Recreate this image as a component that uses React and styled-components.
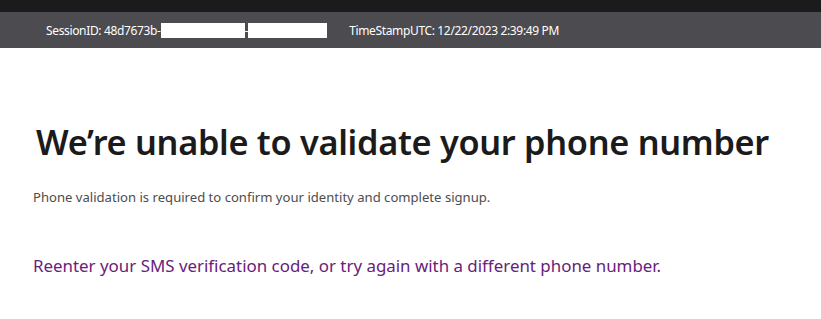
import React from 'react'
import styled, { createGlobalStyle } from 'styled-components'

const GlobalStyle = createGlobalStyle`
  html, body {
    margin: 0;
    padding: 0;
    background: #ffffff;
  }
  body {
    font-family: "Noto Sans", "Open Sans", sans-serif;
  }
`

const TopStrip = styled.div`
  height: 12px;
  background: #1b1b1b;
`

const InfoBar = styled.header`
  height: 36px;
  background: #4b4b50;
  display: flex;
  align-items: center;
  padding-left: 46px;
  gap: 22px;
  color: #ffffff;
  font-size: 12px;
  letter-spacing: -0.35px;
`

const InfoItem = styled.div`
  display: flex;
  align-items: center;
  white-space: nowrap;
`

const Redacted = styled.span`
  display: inline-block;
  width: ${props => props.width}px;
  height: 15px;
  background: #ffffff;
`

const Main = styled.main`
  padding: 0 33px;
`

const Title = styled.h1`
  margin: 0;
  padding-top: 72px;
  padding-left: 3px;
  font-size: 34.3px;
  font-weight: 600;
  line-height: 44px;
  color: #1b1b1b;
  letter-spacing: -0.3px;
`

const Lead = styled.p`
  margin: 23px 0 0;
  font-size: 13.1px;
  line-height: 20px;
  color: #4d4d4d;
`

const RetryText = styled.p`
  margin: 47px 0 0;
  font-size: 16.9px;
  line-height: 24px;
  color: #68217a;
`

export default function App () {
  return (
    <>
      <GlobalStyle />
      <TopStrip />
      <InfoBar>
        <InfoItem>
          SessionID: 48d7673b-<Redacted width={84} />-<Redacted width={79} />
        </InfoItem>
        <InfoItem>TimeStampUTC: 12/22/2023 2:39:49 PM</InfoItem>
      </InfoBar>
      <Main>
        <Title>We’re unable to validate your phone number</Title>
        <Lead>Phone validation is required to confirm your identity and complete signup.</Lead>
        <RetryText>Reenter your SMS verification code, or try again with a different phone number.</RetryText>
      </Main>
    </>
  )
}
